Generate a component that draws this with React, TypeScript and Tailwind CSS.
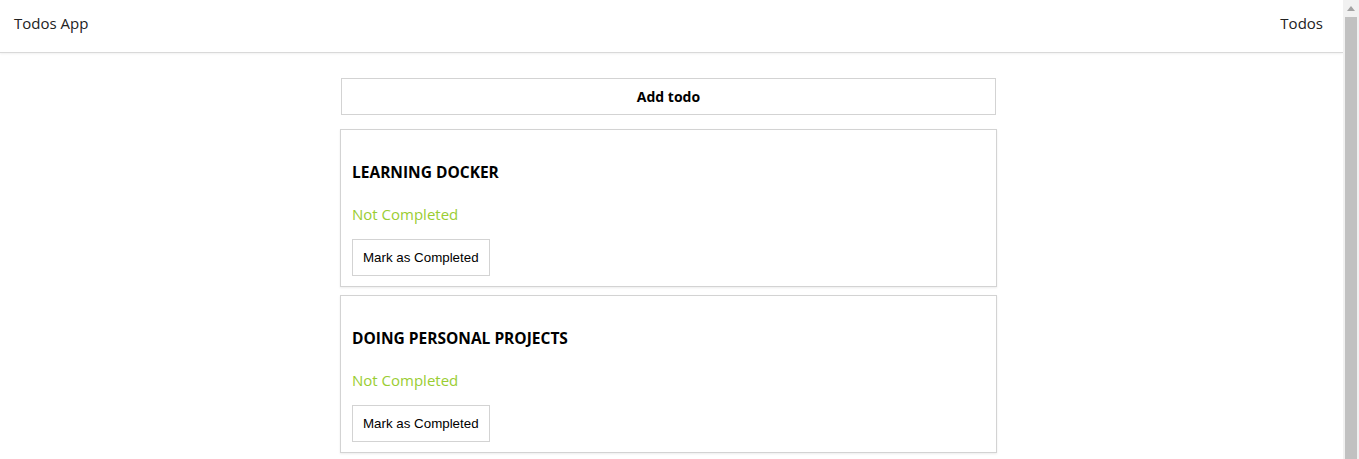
import React from "react";

const todos = [
  { title: "LEARNING DOCKER", completed: false },
  { title: "DOING PERSONAL PROJECTS", completed: false },
];

export default function App() {
  return (
    <div className="h-[459px] overflow-hidden flex bg-white text-black font-['Open_Sans',sans-serif]">
      <div className="flex-1 min-w-0">
        <nav className="h-[53px] flex items-center justify-between pl-[14px] pr-[20px] pb-[6px] border-b border-[#d9d9d9] shadow-[0_1px_2px_rgba(0,0,0,0.06)]">
          <span className="text-[15px] text-[#222]">Todos App</span>
          <span className="text-[15px] text-[#222]">Todos</span>
        </nav>
        <div className="flex justify-center pr-[6px]">
          <div className="w-[657px] pt-[25px] pb-[20px] flex flex-col">
            <button className="mx-[1px] h-[37px] border border-[#d3d3d3] bg-white text-[14px] font-bold text-black font-['Open_Sans',sans-serif]">
              Add todo
            </button>
            <div className="mt-[14px] flex flex-col gap-[8px]">
              {todos.map((t) => (
                <div
                  key={t.title}
                  className="border border-[#d3d3d3] shadow-[0_1px_2px_rgba(0,0,0,0.08)] pl-[11px] pt-[31px] pb-[10px]"
                >
                  <h3 className="text-[15.5px] leading-[22px] font-bold">{t.title}</h3>
                  <p className="mt-[20px] text-[15px] leading-[22px] text-[#9acd32]">
                    {t.completed ? "Completed" : "Not Completed"}
                  </p>
                  <button className="mt-[14px] h-[37px] px-[10px] border border-[#d3d3d3] bg-white text-[13.333px] text-black font-['Liberation_Sans',Arial,sans-serif]">
                    Mark as Completed
                  </button>
                </div>
              ))}
            </div>
          </div>
        </div>
      </div>
      <div className="w-[16px] shrink-0 bg-[#f1f1f1] flex flex-col items-center">
        <div className="h-[16px] w-full flex items-center justify-center">
          <svg width="8" height="5" viewBox="0 0 8 5">
            <polygon points="4,0 8,5 0,5" fill="#a3a3a3" />
          </svg>
        </div>
        <div className="flex-1 w-[12px] mt-[1px] bg-[#c1c1c1]" />
      </div>
    </div>
  );
}
